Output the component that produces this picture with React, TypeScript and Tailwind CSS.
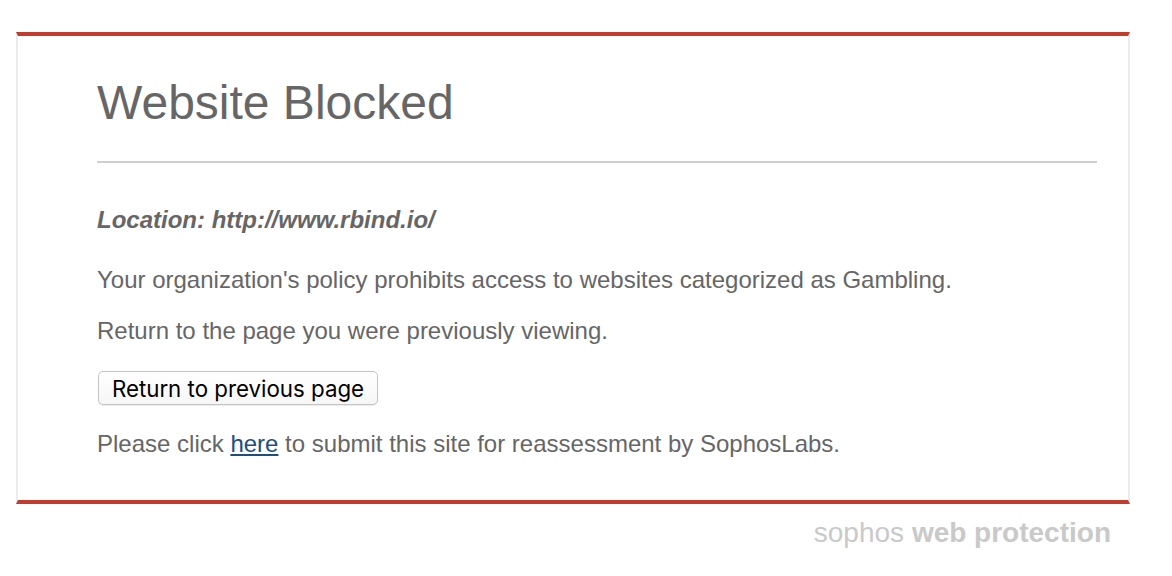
import React from "react";

export default function App() {
  return (
    <div className="min-h-[576px] w-[1172px] bg-white font-['Liberation_Sans',Arial,sans-serif] text-[#666666]">
      <div className="pt-[32px] pl-[16px]">
        <div className="w-[1114px] border-x-2 border-x-[#ebebeb] border-y-4 border-y-[#c23b2c] pl-[79px] pr-[31px] pt-[40px] pb-[42px]">
          <h1 className="text-[48px] leading-[54px] font-normal text-[#666666]">Website Blocked</h1>
          <div className="mt-[31px] h-[2px] bg-[#cfcfcf]" />
          <p className="mt-[43px] text-[24px] leading-[28px] font-bold italic">Location: http://www.rbind.io/</p>
          <p className="mt-[32px] text-[24px] leading-[28px]">
            Your organization's policy prohibits access to websites categorized as Gambling.
          </p>
          <p className="mt-[23px] text-[24px] leading-[28px]">Return to the page you were previously viewing.</p>
          <button className="mt-[26px] ml-[1px] block h-[34px] w-[280px] rounded-[5px] border border-[#c4c4c4] bg-gradient-to-b from-white to-[#f6f6f6] font-['Inter',sans-serif] text-[22.3px] text-black shadow-[0_1px_1px_rgba(0,0,0,0.08)]">
            Return to previous page
          </button>
          <p className="mt-[25px] text-[24px] leading-[28px]">
            Please click{" "}
            <a href="#" className="text-[#1d4e80] underline">
              here
            </a>{" "}
            to submit this site for reassessment by SophosLabs.
          </p>
        </div>
        <div className="w-[1095px] mt-[13px] text-right text-[28px] leading-[32px] text-[#c9c9c9]">
          sophos <span className="font-bold">web protection</span>
        </div>
      </div>
    </div>
  );
}
